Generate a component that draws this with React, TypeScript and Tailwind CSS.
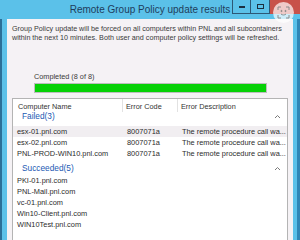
import React from "react";

const font = { fontFamily: '"Liberation Sans", Arial, sans-serif' };

function Row({ name, code, desc, hl }: { name: string; code?: string; desc?: string; hl?: boolean }) {
  return (
    <div className={`flex h-[11px] items-center text-[7.4px] leading-[11px] text-[#2b2b2b] ${hl ? "bg-[#f1eef1]" : ""}`}>
      <div className="w-[110px] pl-[4px] whitespace-nowrap">{name}</div>
      <div className="w-[55px] pl-[4px] whitespace-nowrap">{code}</div>
      <div className="flex-1 pl-[4px] whitespace-nowrap">{desc}</div>
    </div>
  );
}

function Group({ label, cls }: { label: string; cls: string }) {
  return (
    <div className={`flex items-center justify-between pl-[9px] pr-[6px] ${cls}`}>
      <span className="text-[8.3px] leading-[9px] text-[#2259b3]">{label}</span>
      <svg width="7" height="5" viewBox="0 0 7 5">
        <path d="M1 4 L3.5 1.5 L6 4" fill="none" stroke="#7a7a7a" strokeWidth="1" />
      </svg>
    </div>
  );
}

export default function App() {
  const desc = "The remote procedure call wa...";
  return (
    <div className="relative w-[300px] h-[240px] overflow-hidden bg-[#5bc1e9]" style={font}>
      {/* title bar */}
      <div className="grid grid-cols-[68px_1fr_68px] h-[19px]">
        <div />
        <div className="flex items-center justify-center text-[10px] leading-[19px] text-[#1f3d5c] whitespace-nowrap">
          Remote Group Policy update results
        </div>
        <div className="flex h-[14px]">
          <div className="w-[19px] border border-[#2d5876] border-t-0 flex items-center justify-center">
            <div className="w-[6px] h-[2px] bg-[#1c2f40] mt-[1px]" />
          </div>
          <div className="w-[19px] border-b border-r border-[#2d5876] flex items-center justify-center">
            <div className="w-[7px] h-[5px] border-[1.5px] border-[#1c2f40]" />
          </div>
          <div className="w-[30px] bg-[#c8524a]" />
        </div>
      </div>
      {/* body */}
      <div className="flex h-[221px]">
        <div className="w-[2px] bg-[#2a6f98]" />
        <div className="w-[5px]" />
        <div className="flex-1 bg-[#f5f2f5] flex flex-col">
          <div className="pt-[5px] pl-[5px] text-[7.2px] leading-[9px] text-[#3a3a3a] whitespace-nowrap">
            <div>Group Policy update will be forced on all computers within PNL and all subcontainers</div>
            <div>within the next 10 minutes. Both user and computer policy settings will be refreshed.</div>
          </div>
          <div className="mt-[30px] pl-[27px] text-[7.3px] leading-[9px] text-[#3a3a3a]">Completed (8 of 8)</div>
          <div className="ml-[27px] mt-[2px] w-[233px] h-[10px] border border-[#bdbdbd] bg-[#e6e6e6]">
            <div className="h-full bg-[#06d106]" style={{ width: "100%" }} />
          </div>
          <div className="mx-[5px] mt-[5px] flex-1 bg-white border border-[#b4b4b4] border-b-0">
            <div className="flex h-[13px] text-[7.3px] leading-[9px] text-[#333]">
              <div className="w-[110px] pl-[5px] pt-[3px] h-full border-r border-[#e2e2e2]">Computer Name</div>
              <div className="w-[55px] pl-[3px] pt-[3px] h-full border-r border-[#e2e2e2]">Error Code</div>
              <div className="flex-1 pl-[3px] pt-[3px] h-full">Error Description</div>
            </div>
            <Group label="Failed(3)" cls="pb-[5px]" />
            <Row name="esx-01.pnl.com" code="8007071a" desc={desc} hl />
            <Row name="esx-02.pnl.com" code="8007071a" desc={desc} />
            <Row name="PNL-PROD-WIN10.pnl.com" code="8007071a" desc={desc} />
            <Group label="Succeeded(5)" cls="pt-[5px] pb-[2px]" />
            <Row name="PKI-01.pnl.com" />
            <Row name="PNL-Mail.pnl.com" />
            <Row name="vc-01.pnl.com" />
            <Row name="Win10-Client.pnl.com" />
            <Row name="WIN10Test.pnl.com" />
          </div>
        </div>
        <div className="w-[4px]" />
        <div className="w-[3px] bg-[#2f86b6]" />
      </div>
      {/* screenshot overlay circle */}
      <div className="absolute left-[273px] top-[2px] w-[21px] h-[21px] rounded-full bg-white/70 flex items-center justify-center">
        <svg width="13" height="13" viewBox="0 0 13 13" fill="none" stroke="#8a8a8a" strokeWidth="1">
          <path d="M1 4V1h3M9 1h3v3M12 9v3H9M4 12H1V9" />
          <circle cx="4.5" cy="5" r="0.6" fill="#8a8a8a" />
          <circle cx="8.5" cy="5" r="0.6" fill="#8a8a8a" />
          <path d="M4 8c1.5 1.3 3.5 1.3 5 0" />
        </svg>
      </div>
    </div>
  );
}
